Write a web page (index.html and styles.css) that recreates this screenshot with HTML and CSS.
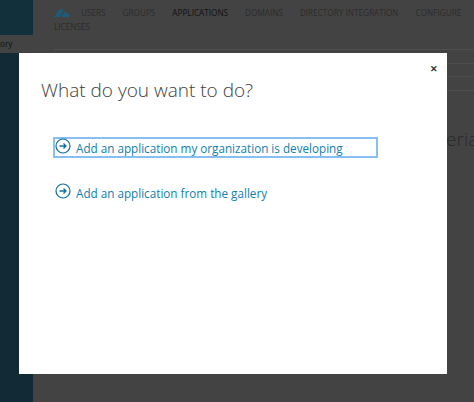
FILE: index.html
```html
<!DOCTYPE html>
<html lang="en">
<head>
    <meta charset="UTF-8">
    <meta name="viewport" content="width=device-width, initial-scale=1.0">
    <title>Add application</title>
    <link rel="stylesheet" href="styles.css">
</head>
<body>
    <div class="shell">
        <div class="sidebar">
            <div class="side-top"></div>
            <div class="side-item">ory</div>
            <div class="side-rest"></div>
        </div>
        <div class="main">
            <div class="nav">
                <svg class="cloud" width="16" height="10" viewBox="0 0 16 10">
                    <path d="M0 9 L5 2 Q6.5 0 8.5 1.5 L9.5 2.5 L5.5 9 Z" fill="#1f5a78"/>
                    <path d="M8 9 Q7 6.5 9.5 5.5 Q11.5 3 13.5 5.5 Q16 6.5 15.5 9 Z" fill="#1f5a78"/>
                </svg>
                <a>USERS</a>
                <a>GROUPS</a>
                <a class="current">APPLICATIONS</a>
                <a>DOMAINS</a>
                <a>DIRECTORY INTEGRATION</a>
                <a>CONFIGURE</a>
                <a class="licenses">LICENSES</a>
            </div>
            <div class="rows">
                <div class="row"></div>
                <div class="row"></div>
                <div class="row"></div>
                <div class="row"></div>
            </div>
            <div class="behind">criteria</div>
        </div>
    </div>
    <div class="modal">
        <span class="close">&#10005;</span>
        <h1>What do you want to do?</h1>
        <a class="choice focused">
            <svg class="arrow" width="16" height="16" viewBox="0 0 16 16">
                <circle cx="8" cy="8" r="7" fill="none" stroke="#0f6f9e" stroke-width="1.2"/>
                <path d="M4.5 8 H11 M8.5 5.5 L11 8 L8.5 10.5" fill="none" stroke="#0f6f9e" stroke-width="1.3"/>
            </svg>
            Add an application my organization is developing
        </a>
        <a class="choice">
            <svg class="arrow" width="16" height="16" viewBox="0 0 16 16">
                <circle cx="8" cy="8" r="7" fill="none" stroke="#0f6f9e" stroke-width="1.2"/>
                <path d="M4.5 8 H11 M8.5 5.5 L11 8 L8.5 10.5" fill="none" stroke="#0f6f9e" stroke-width="1.3"/>
            </svg>
            Add an application from the gallery
        </a>
    </div>
</body>
</html>
```

FILE: styles.css
```css
* { margin: 0; padding: 0; box-sizing: border-box; }
body { width: 474px; height: 402px; overflow: hidden; position: relative; background-color: #434343; font-family: "Open Sans", "Noto Sans", sans-serif; }
.shell { display: flex; height: 402px; }
.sidebar { width: 33px; display: flex; flex-direction: column; flex-shrink: 0; }
.side-top { height: 35px; background-color: #12303c; }
.side-item { height: 18px; padding-top: 3px; font-size: 8px; font-weight: 600; color: #1c1c1c; line-height: 12px; }
.side-rest { flex: 1; background-color: #122a35; }
.main { flex: 1; padding: 6px 0 0 21px; position: relative; overflow: hidden; }
.nav { display: flex; flex-wrap: wrap; align-items: center; column-gap: 17px; font-size: 8.2px; color: #2c2c2c; line-height: 14px; width: 420px; }
.nav .current { color: #111; font-weight: 500; }
.cloud { margin-right: -6px; }
.licenses { width: 100%; }
.rows { margin-top: 15px; }
.row { height: 13.7px; border-top: 1px solid #4e4e4e; }
.behind { position: absolute; top: 126px; left: 386px; font-size: 19px; color: #2a2a2a; font-weight: 300; white-space: nowrap; }
.modal { position: absolute; left: 19px; top: 53px; width: 428px; height: 321px; background-color: #fff; padding: 23px 0 0 22px; }
.modal h1 { font-size: 19px; font-weight: 300; color: #3c3c3c; line-height: 28px; }
.close { position: absolute; top: 9px; right: 9px; font-size: 9px; font-weight: 700; color: #333; }
.choice { display: flex; align-items: center; gap: 5px; width: 325px; height: 21px; margin-left: 12px; font-size: 11.7px; color: #0e7fb0; white-space: nowrap; border: 2px solid transparent; }
.focused { margin-top: 33px; margin-bottom: 24px; border-color: #86bff0; }
.arrow { flex-shrink: 0; margin-top: -3px; }
```
